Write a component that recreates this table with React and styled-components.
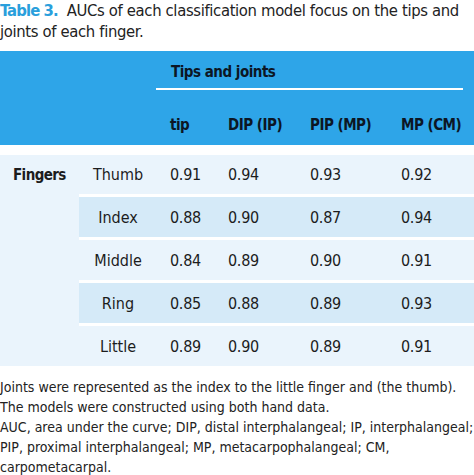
import React from 'react';
import styled, { createGlobalStyle } from 'styled-components';

const GlobalStyle = createGlobalStyle`
  html, body {
    margin: 0;
    padding: 0;
    background: #ffffff;
  }
  body {
    font-family: "Liberation Sans Narrow", "DejaVu Sans Condensed", "Liberation Sans", sans-serif;
    color: #1c1c1c;
  }
`;

const Page = styled.div`
  width: 474px;
  height: 475px;
  overflow: hidden;
`;

const Caption = styled.p`
  margin: 0 0 9px 0;
  font-size: 16.5px;
  line-height: 21px;
  letter-spacing: -0.35px;
  white-space: nowrap;
  color: #222;
`;

const CaptionLabel = styled.span`
  color: #2a9fdc;
  font-weight: bold;
  letter-spacing: -0.9px;
  margin-right: 9px;
`;

const HeadBand = styled.div`
  background: #2ea5e8;
  height: 94px;
  display: flex;
  flex-direction: column;
  padding-left: 156px;
  color: #0c1624;
  font-weight: bold;
  font-size: 15px;
  letter-spacing: -0.5px;
`;

const GroupTitle = styled.div`
  height: 39px;
  padding-left: 15px;
  display: flex;
  align-items: flex-end;
  padding-bottom: 7px;
  box-sizing: border-box;
  border-bottom: 2px solid #ffffff;
  margin-right: 11px;
`;

const ColRow = styled.div`
  flex: 1;
  display: grid;
  grid-template-columns: 58px 82px 91px 1fr;
  align-items: center;
  padding-top: 14px;
`;

const HeadCell = styled.div`
  padding-left: 14px;
`;

const Body = styled.div`
  margin-top: 10px;
  display: flex;
  background: #eaf4fc;
  font-size: 16px;
`;

const SideLabel = styled.div`
  width: 79px;
  padding: 11px 0 0 13px;
  box-sizing: border-box;
  font-weight: bold;
  font-size: 15px;
  letter-spacing: -0.6px;
`;

const Rows = styled.div`
  flex: 1;
  display: flex;
  flex-direction: column;
  gap: 3px;
  background: #ffffff;
`;

const Row = styled.div`
  height: ${({ first }) => (first ? 39 : 40)}px;
  display: grid;
  grid-template-columns: 78px 58px 82px 91px 1fr;
  align-items: center;
  background: ${({ shaded }) => (shaded ? '#d5eaf8' : '#eaf4fc')};
`;

const NameCell = styled.div`
  text-align: center;
`;

const ValueCell = styled.div`
  padding-left: 13px;
  letter-spacing: -0.3px;
`;

const Notes = styled.div`
  margin-top: 11px;
  font-size: 14px;
  line-height: 20px;
  color: #222;
`;

const rows = [
  ['Thumb', '0.91', '0.94', '0.93', '0.92'],
  ['Index', '0.88', '0.90', '0.87', '0.94'],
  ['Middle', '0.84', '0.89', '0.90', '0.91'],
  ['Ring', '0.85', '0.88', '0.89', '0.93'],
  ['Little', '0.89', '0.90', '0.89', '0.91'],
];

export default function App() {
  return (
    <Page>
      <GlobalStyle />
      <Caption>
        <CaptionLabel>Table 3.</CaptionLabel>
        AUCs of each classification model focus on the tips and
        <br />
        joints of each finger.
      </Caption>
      <HeadBand>
        <GroupTitle>Tips and joints</GroupTitle>
        <ColRow>
          <HeadCell>tip</HeadCell>
          <HeadCell>DIP (IP)</HeadCell>
          <HeadCell>PIP (MP)</HeadCell>
          <HeadCell>MP (CM)</HeadCell>
        </ColRow>
      </HeadBand>
      <Body>
        <SideLabel>Fingers</SideLabel>
        <Rows>
          {rows.map((r, i) => (
            <Row key={r[0]} first={i === 0} shaded={i % 2 === 1}>
              <NameCell>{r[0]}</NameCell>
              {r.slice(1).map((v, j) => (
                <ValueCell key={j}>{v}</ValueCell>
              ))}
            </Row>
          ))}
        </Rows>
      </Body>
      <Notes>
        Joints were represented as the index to the little finger and (the thumb).
        <br />
        The models were constructed using both hand data.
        <br />
        AUC, area under the curve; DIP, distal interphalangeal; IP, interphalangeal;
        PIP, proximal interphalangeal; MP, metacarpophalangeal; CM, carpometacarpal.
      </Notes>
    </Page>
  );
}
